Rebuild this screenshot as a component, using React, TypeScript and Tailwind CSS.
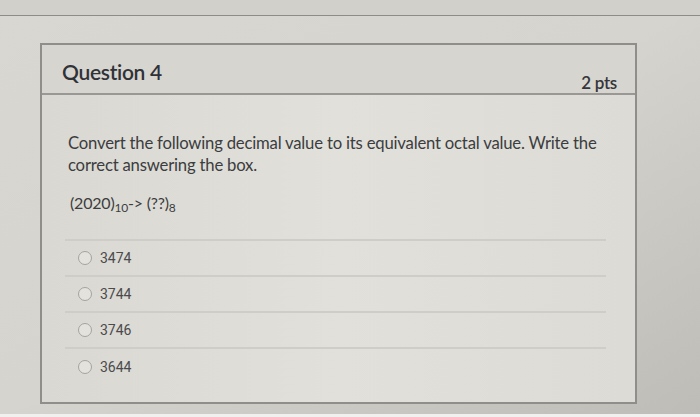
const options = ['3474', '3744', '3746', '3644'];

export default function App() {
  return (
    <div className="w-[700px] h-[417px] overflow-hidden flex flex-col bg-gradient-to-br from-[#d9d7d1] via-[#d6d4ce] to-[#bdbcb7] font-['Lato',sans-serif]">
      <div className="h-[16px] shrink-0 border-b border-[#8d8c88] bg-[#d2d0ca]" />
      <div className="flex-1 pt-[27px] pl-[40px] pr-[63px] pb-[10px] border-b-[3px] border-[#f1f0ee]">
        <div className="h-full border-2 border-[#8f8e8a] bg-gradient-to-r from-[#dad8d2] via-[#e2e0da] to-[#dddbd5]">
          <div className="h-[50px] flex justify-between border-b-2 border-[#999894] bg-[#d7d5cf] pl-[20px] pr-[18px]">
            <div className="pt-[11px] text-[21px] font-semibold text-[#2f3237] tracking-[-0.3px]">Question 4</div>
            <div className="pt-[25px] text-[17px] font-semibold text-[#34363a] tracking-[-0.3px]">2 pts</div>
          </div>
          <div className="pl-[26px] pr-[26px] pt-[37px] text-[#3b3d40]">
            <p className="text-[16.7px] leading-[22px] tracking-[-0.2px]">
              Convert the following decimal value to its equivalent octal value. Write the correct answering the box.
            </p>
            <p className="mt-[15px] pl-[2px] text-[16px] tracking-[-0.2px]">
              (2020)<sub className="text-[12px]">10</sub>-&gt; (??)<sub className="text-[12px]">8</sub>
            </p>
            <div className="mt-[24px] -ml-[3px] mr-[3px] border-t-2 border-[#cfcdc7]">
              {options.map((o, i) => (
                <div
                  key={o}
                  className={`h-[36px] flex items-center gap-[8px] pl-[13px] ${i < options.length - 1 ? 'border-b-2 border-[#cfcdc7]' : ''}`}
                >
                  <span className="w-[14px] h-[14px] rounded-full border border-[#a4a39f] bg-[#e4e2dc]" />
                  <span className="text-[14px] text-[#4a4b4d] font-['Roboto',sans-serif]">{o}</span>
                </div>
              ))}
            </div>
          </div>
        </div>
      </div>
    </div>
  );
}
